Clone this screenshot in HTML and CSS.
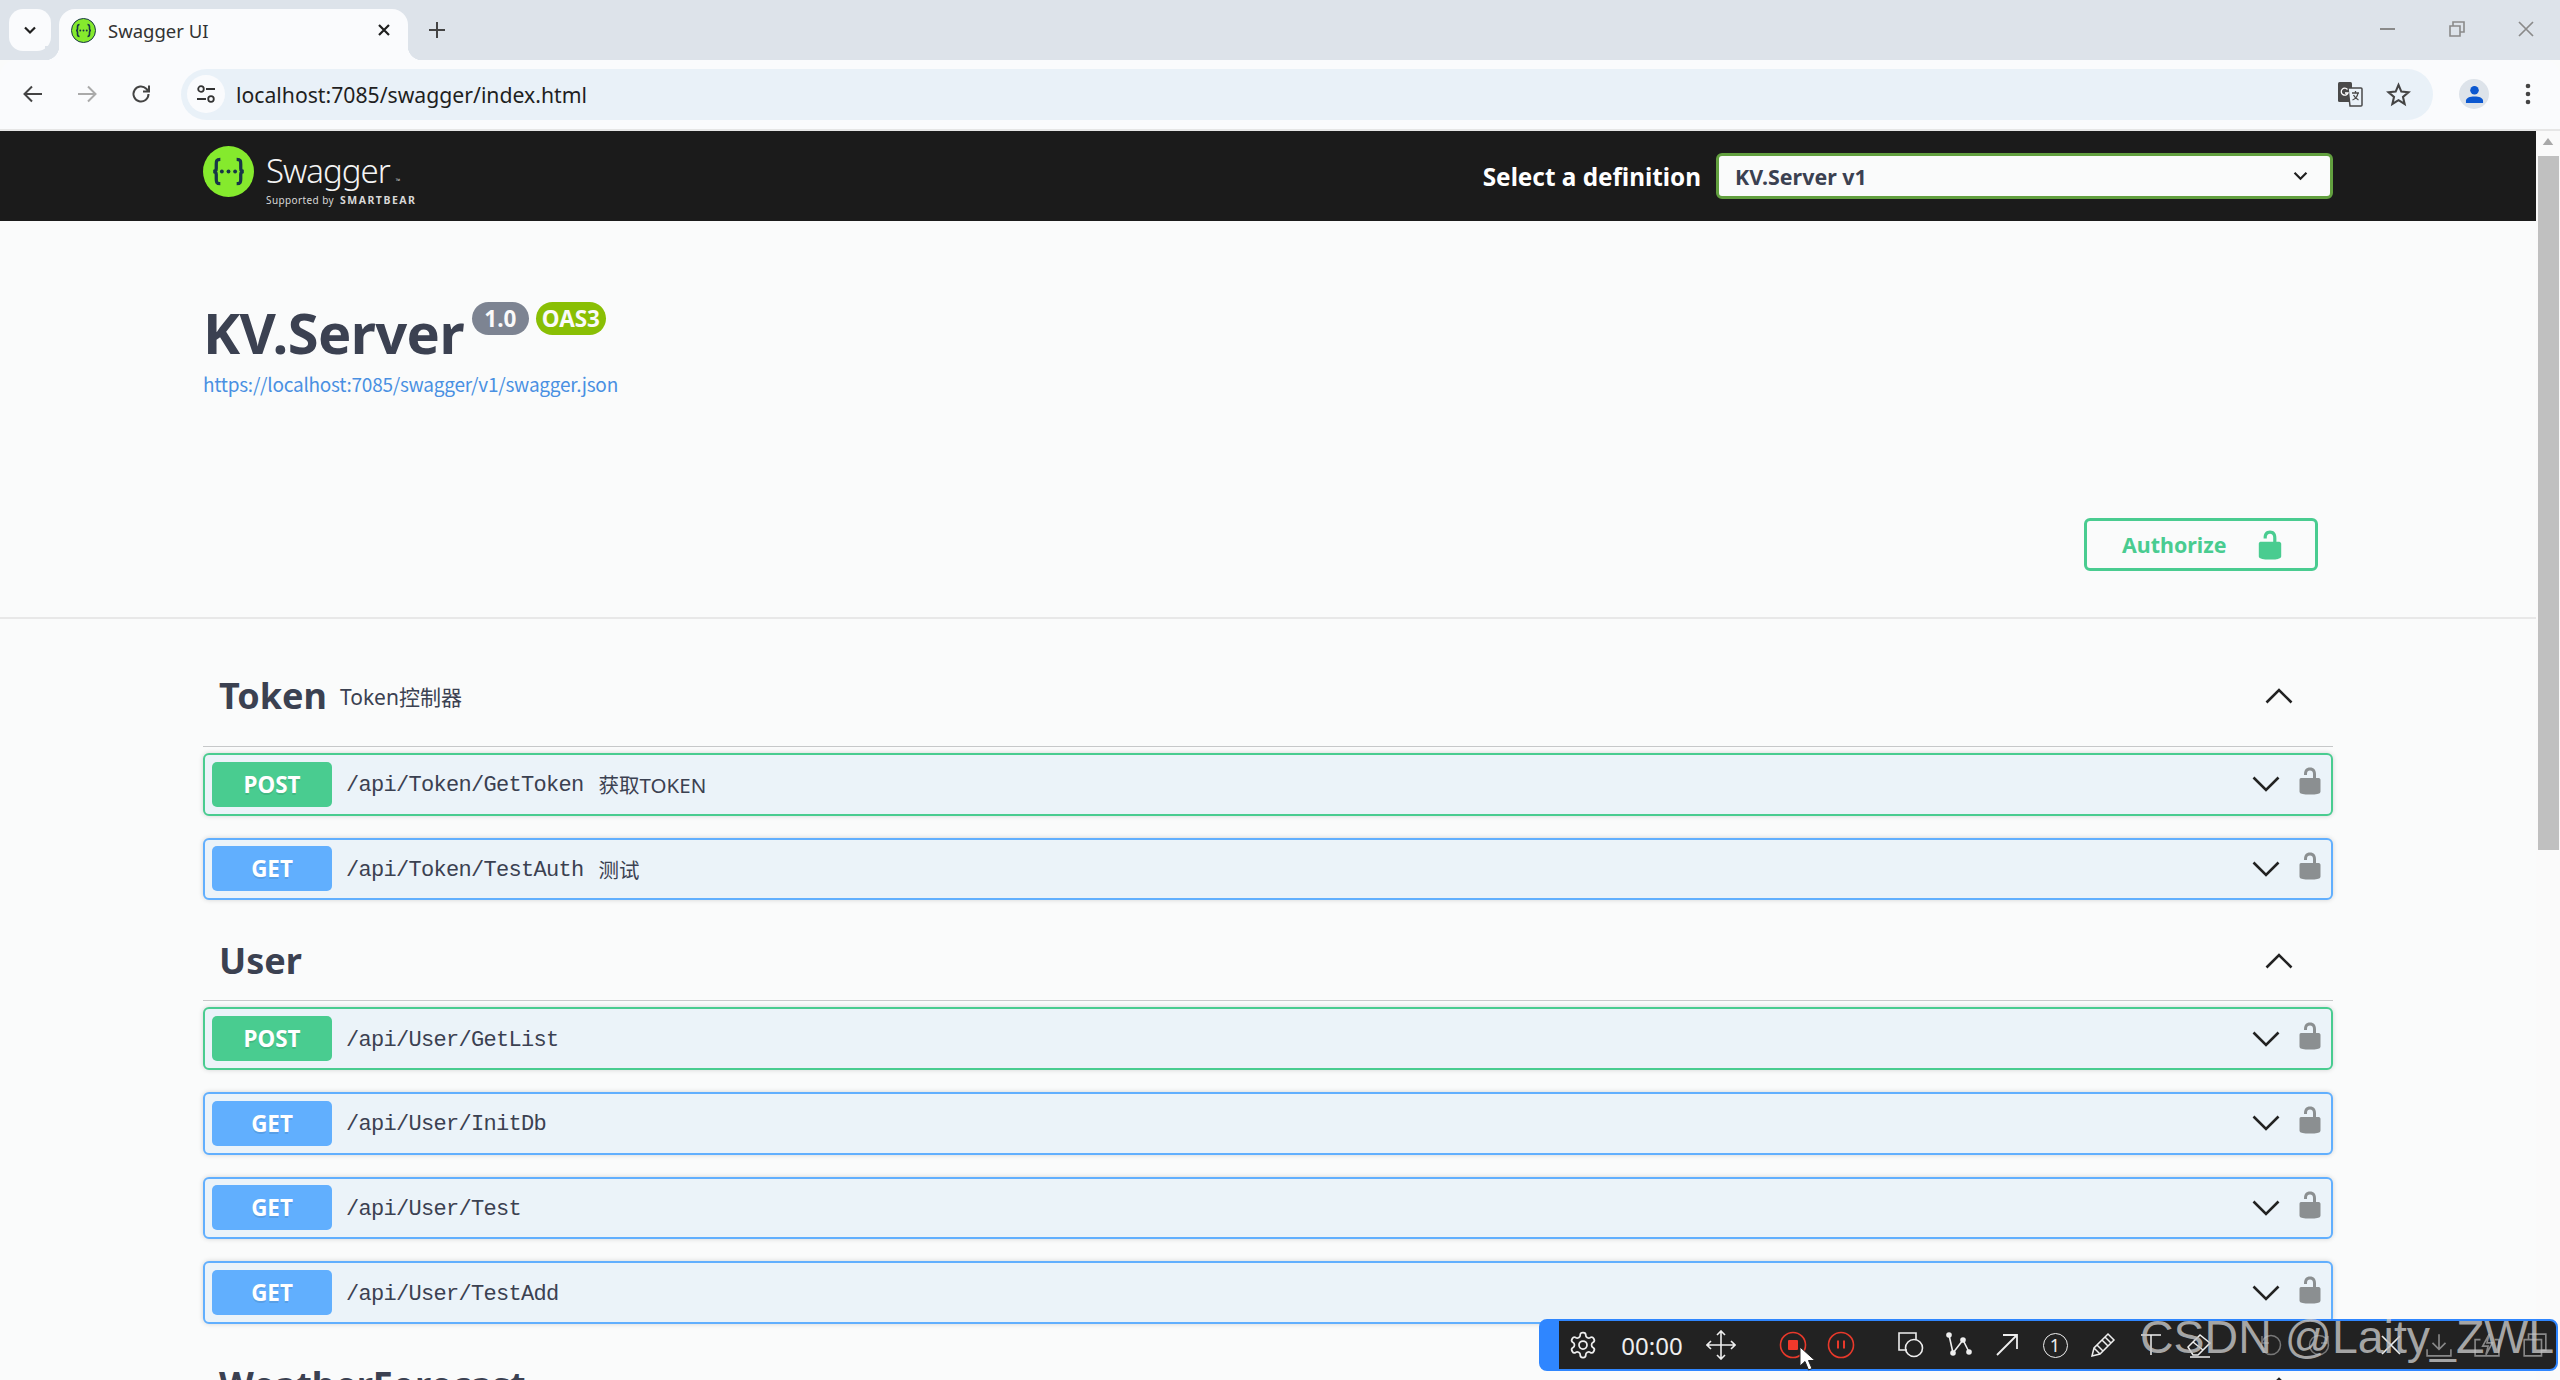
FILE: index.html
```html
<!DOCTYPE html>
<html lang="zh">
<head>
<meta charset="utf-8">
<title>Swagger UI</title>
<link rel="stylesheet" href="styles.css">
</head>
<body>
<svg class="defs" width="0" height="0" aria-hidden="true">
  <symbol id="lock" viewBox="0 0 20 20"><path d="M15.8 8H14V5.6C14 2.703 12.665 1 10 1 7.334 1 6 2.703 6 5.6V6h2v-.801C8 3.754 8.797 3 10 3c1.203 0 2 .754 2 2.199V8H4c-.553 0-1 .646-1 1.199V17c0 .549.428 1.139.951 1.307l1.197.387C5.672 18.861 6.55 19 7.1 19h5.8c.549 0 1.428-.139 1.951-.307l1.196-.387c.524-.167.953-.757.953-1.306V9.199C17 8.646 16.352 8 15.8 8z"/></symbol>
  <symbol id="down" viewBox="0 0 28 16"><path d="M1.5 1.5 14 14 26.5 1.5" fill="none" stroke="currentColor" stroke-width="2.6"/></symbol>
  <symbol id="up" viewBox="0 0 28 16"><path d="M1.5 14.5 14 2 26.5 14.5" fill="none" stroke="currentColor" stroke-width="2.6"/></symbol>
  <symbol id="brace" viewBox="0 0 50 50"><path d="M17 13c-4 0-4 2-4 5v4c0 2-1 3-3 3 2 0 3 1 3 3v4c0 3 0 5 4 5M33 13c4 0 4 2 4 5v4c0 2 1 3 3 3-2 0-3 1-3 3v4c0 3 0 5-4 5" fill="none" stroke="#173647" stroke-width="3.2"/><circle cx="18.5" cy="25" r="1.9" fill="#173647"/><circle cx="25" cy="25" r="1.9" fill="#173647"/><circle cx="31.5" cy="25" r="1.9" fill="#173647"/></symbol>
</svg>

<header class="chrome">
  <div class="tabstrip">
    <button class="tab-list" type="button"><svg viewBox="0 0 16 16" width="16" height="16"><path d="M3 5.5 8 10.5 13 5.5" fill="none" stroke="#1f1f1f" stroke-width="2.2"/></svg></button>
    <div class="tab">
      <svg class="favicon" viewBox="0 0 50 50" width="25" height="25"><circle cx="25" cy="25" r="24" fill="#85ea2d" stroke="#173647" stroke-width="2"/><use href="#brace"/></svg>
      <span class="tab-title">Swagger UI</span>
      <svg class="tab-close" viewBox="0 0 16 16" width="16" height="16"><path d="M3 3 13 13M13 3 3 13" stroke="#1f1f1f" stroke-width="2.2"/></svg>
    </div>
    <svg class="new-tab" viewBox="0 0 18 18" width="18" height="18"><path d="M9 1v16M1 9h16" stroke="#444" stroke-width="2"/></svg>
    <div class="window-controls">
      <svg viewBox="0 0 16 16" width="16" height="16"><path d="M0 8h15" stroke="#8a8a8a" stroke-width="2"/></svg>
      <svg viewBox="0 0 16 16" width="16" height="16"><path d="M1 5h10v10H1zM4 5V1h11v10h-4" fill="none" stroke="#8a8a8a" stroke-width="1.6"/></svg>
      <svg viewBox="0 0 16 16" width="16" height="16"><path d="M1 1 15 15M15 1 1 15" stroke="#8a8a8a" stroke-width="1.7"/></svg>
    </div>
  </div>
  <div class="toolbar">
    <svg class="nav" viewBox="0 0 24 24" width="24" height="24"><path d="M21 12H4M11 4.500 3.500 12 11 19.500" fill="none" stroke="#444" stroke-width="2"/></svg>
    <svg class="nav" viewBox="0 0 24 24" width="24" height="24"><path d="M3 12h17M13 4.500 20.500 12 13 19.500" fill="none" stroke="#aaa" stroke-width="2"/></svg>
    <svg class="nav" viewBox="0 0 24 24" width="24" height="24"><path d="M19.500 12a7.500 7.500 0 1 1-2.200-5.300L20 9.500M20 3.500v6h-6" fill="none" stroke="#444" stroke-width="2"/></svg>
    <div class="omnibox">
      <span class="site-info"><svg viewBox="0 0 20 20" width="20" height="20"><circle cx="5" cy="5" r="2.800" fill="none" stroke="#333" stroke-width="1.800"/><path d="M10 5h9M1 15h9" stroke="#333" stroke-width="1.800"/><circle cx="15" cy="15" r="2.800" fill="none" stroke="#333" stroke-width="1.800"/></svg></span>
      <span class="url">localhost:7085/swagger/index.html</span>
      <svg class="translate" viewBox="0 0 26 26" width="26" height="26"><rect x="1" y="1" width="14" height="20" rx="1.500" fill="#4a4a4a"/><path d="M11 7h13a1 1 0 0 1 1 1v16a1 1 0 0 1-1 1H13l-2-18z" fill="#eaf2f9" stroke="#4a4a4a" stroke-width="1.500"/><path d="M10.500 8.500a3.500 3.500 0 1 0 .5 3.500H8" fill="none" stroke="#fff" stroke-width="1.300"/><path d="M15 12h7M18.500 10v2M21 12c-.5 3-3 6-5.500 7M16.500 14c1 2 3 4 5 5" fill="none" stroke="#4a4a4a" stroke-width="1.300"/></svg>
      <svg class="star" viewBox="0 0 24 24" width="25" height="25"><path d="M12 2.800 14.700 9.200 21.600 9.800 16.300 14.300 17.900 21.100 12 17.500 6.100 21.100 7.700 14.300 2.400 9.800 9.300 9.200z" fill="none" stroke="#444" stroke-width="2"/></svg>
    </div>
    <span class="avatar"><svg viewBox="0 0 20 20" width="20" height="20"><circle cx="10" cy="5.500" r="4.500" fill="#0b57d0"/><path d="M1 19v-2.500C1 13.500 5 12 10 12s9 1.500 9 4.500V19z" fill="#0b57d0"/></svg></span>
    <svg class="kebab" viewBox="0 0 6 24" width="6" height="24"><circle cx="3" cy="4" r="2.300" fill="#444"/><circle cx="3" cy="12" r="2.300" fill="#444"/><circle cx="3" cy="20" r="2.300" fill="#444"/></svg>
  </div>
</header>

<div class="viewport">
  <main class="page">
    <nav class="topbar">
      <div class="brand">
        <svg class="logo" viewBox="0 0 50 50" width="51" height="51"><circle cx="25" cy="25" r="25" fill="#85ea2d"/><use href="#brace"/></svg>
        <div class="brand-text">
          <span class="brand-name">Swagger<sup class="tm">™</sup></span>
          <span class="brand-sub">Supported by <b>SMARTBEAR</b></span>
        </div>
      </div>
      <label class="definition">
        <span class="definition-label">Select a definition</span>
        <span class="select">KV.Server v1<svg viewBox="0 0 16 12" width="15" height="11"><path d="M1.500 2 8 8.500 14.500 2" fill="none" stroke="#1f1f1f" stroke-width="2.400"/></svg></span>
      </label>
    </nav>

    <section class="info">
      <div class="title-row">
        <h1>KV.Server</h1>
        <span class="pill pill-version">1.0</span>
        <span class="pill pill-oas">OAS3</span>
      </div>
      <a class="spec-link" href="#">https://localhost:7085/swagger/v1/swagger.json</a>
    </section>

    <section class="schemes">
      <button class="authorize" type="button">Authorize<svg width="32" height="32"><use href="#lock"/></svg></button>
    </section>

    <section class="ops">
      <div class="tag tag-described">
        <h2>Token</h2><span class="tag-desc">Token控制器</span>
        <svg class="chev-up" width="28" height="16"><use href="#up"/></svg>
      </div>
      <div class="op post"><span class="method">POST</span><span class="path">/api/Token/GetToken</span><span class="desc">获取TOKEN</span><svg class="chev" width="28" height="16"><use href="#down"/></svg><svg class="op-lock" width="30" height="30"><use href="#lock"/></svg></div>
      <div class="op get"><span class="method">GET</span><span class="path">/api/Token/TestAuth</span><span class="desc">测试</span><svg class="chev" width="28" height="16"><use href="#down"/></svg><svg class="op-lock" width="30" height="30"><use href="#lock"/></svg></div>

      <div class="tag">
        <h2>User</h2>
        <svg class="chev-up" width="28" height="16"><use href="#up"/></svg>
      </div>
      <div class="op post"><span class="method">POST</span><span class="path">/api/User/GetList</span><svg class="chev" width="28" height="16"><use href="#down"/></svg><svg class="op-lock" width="30" height="30"><use href="#lock"/></svg></div>
      <div class="op get"><span class="method">GET</span><span class="path">/api/User/InitDb</span><svg class="chev" width="28" height="16"><use href="#down"/></svg><svg class="op-lock" width="30" height="30"><use href="#lock"/></svg></div>
      <div class="op get"><span class="method">GET</span><span class="path">/api/User/Test</span><svg class="chev" width="28" height="16"><use href="#down"/></svg><svg class="op-lock" width="30" height="30"><use href="#lock"/></svg></div>
      <div class="op get"><span class="method">GET</span><span class="path">/api/User/TestAdd</span><svg class="chev" width="28" height="16"><use href="#down"/></svg><svg class="op-lock" width="30" height="30"><use href="#lock"/></svg></div>

      <div class="tag">
        <h2>WeatherForecast</h2>
        <svg class="chev-up" width="28" height="16"><use href="#up"/></svg>
      </div>
    </section>
  </main>
  <div class="scrollbar">
    <svg class="scroll-arrow" viewBox="0 0 12 8" width="12" height="7"><path d="M0 8 6 0 12 8z" fill="#a8a8a8"/></svg>
    <div class="scroll-thumb"></div>
  </div>
</div>

<aside class="recorder">
  <span class="tool"><svg viewBox="0 0 24 24" width="30" height="30"><path d="M12.220 2h-.44a2 2 0 0 0-2 2v.18a2 2 0 0 1-1 1.730l-.43.25a2 2 0 0 1-2 0l-.15-.08a2 2 0 0 0-2.730.73l-.22.38a2 2 0 0 0 .73 2.730l.15.1a2 2 0 0 1 1 1.720v.51a2 2 0 0 1-1 1.740l-.15.09a2 2 0 0 0-.73 2.730l.22.38a2 2 0 0 0 2.730.73l.15-.08a2 2 0 0 1 2 0l.43.25a2 2 0 0 1 1 1.730V20a2 2 0 0 0 2 2h.44a2 2 0 0 0 2-2v-.18a2 2 0 0 1 1-1.730l.43-.25a2 2 0 0 1 2 0l.15.08a2 2 0 0 0 2.730-.73l.22-.39a2 2 0 0 0-.73-2.730l-.15-.08a2 2 0 0 1-1-1.740v-.5a2 2 0 0 1 1-1.740l.15-.09a2 2 0 0 0 .73-2.730l-.22-.38a2 2 0 0 0-2.730-.73l-.15.08a2 2 0 0 1-2 0l-.43-.25a2 2 0 0 1-1-1.730V4a2 2 0 0 0-2-2z" fill="none" stroke="#eee" stroke-width="1.400"/><circle cx="12" cy="12" r="3.200" fill="none" stroke="#eee" stroke-width="1.400"/></svg></span>
  <span class="time">00:00</span>
  <span class="tool"><svg viewBox="0 0 30 30" width="30" height="30"><path d="M15 1v28M1 15h28M11 5l4-4 4 4M11 25l4 4 4-4M5 11l-4 4 4 4M25 11l4 4-4 4" fill="none" stroke="#eee" stroke-width="1.600"/></svg></span>
  <span class="tool tool-gap"><svg viewBox="0 0 28 28" width="28" height="28"><circle cx="14" cy="14" r="12.500" fill="none" stroke="#e8392b" stroke-width="1.600"/><rect x="9" y="9" width="10" height="10" rx="1" fill="#f0392b"/></svg></span>
  <span class="tool"><svg viewBox="0 0 28 28" width="28" height="28"><circle cx="14" cy="14" r="12.500" fill="none" stroke="#e8392b" stroke-width="1.600"/><path d="M11 9.500v8M17 9.500v8" stroke="#e8392b" stroke-width="2"/></svg></span>
  <span class="tool tool-gap-sm"><svg viewBox="0 0 26 26" width="26" height="26"><path d="M9 18H1V1h17v7" fill="none" stroke="#eee" stroke-width="1.600"/><circle cx="16" cy="16" r="8.500" fill="none" stroke="#eee" stroke-width="1.600"/></svg></span>
  <span class="tool"><svg viewBox="0 0 28 28" width="28" height="28"><path d="M4 4 8 22 18 9 24 21" fill="none" stroke="#eee" stroke-width="1.600"/><circle cx="4" cy="4" r="2.800" fill="#eee"/><circle cx="8" cy="22" r="2.800" fill="#eee"/><circle cx="18" cy="9" r="2.800" fill="#eee"/><circle cx="24" cy="21" r="2.800" fill="#eee"/></svg></span>
  <span class="tool"><svg viewBox="0 0 24 24" width="24" height="24"><path d="M2 22 22 2M8 2h14v14" fill="none" stroke="#eee" stroke-width="1.800"/></svg></span>
  <span class="tool"><span class="num">1</span></span>
  <span class="tool"><svg viewBox="0 0 26 26" width="26" height="26"><path d="M2 24 4 16 18 2 24 8 10 22zM15 5l6 6M4 16l6 6M7 13l6 6M12 8l6 6" fill="none" stroke="#eee" stroke-width="1.500"/></svg></span>
  <span class="tool"><svg viewBox="0 0 24 24" width="24" height="24"><path d="M2 2h20M12 2v20" stroke="#eee" stroke-width="1.500"/></svg></span>
  <span class="tool"><svg viewBox="0 0 26 26" width="26" height="26"><path d="M2 15 14 3 24 11 12 23H7zM7 10l10 8M4 25h20" fill="none" stroke="#eee" stroke-width="1.500"/></svg></span>
  <span class="tool tool-gap"><svg viewBox="0 0 24 24" width="24" height="24"><circle cx="12" cy="12" r="9.500" fill="none" stroke="#777" stroke-width="1.500"/><path d="M3 3v7h7" fill="none" stroke="#777" stroke-width="1.500"/></svg></span>
  <span class="tool"><svg viewBox="0 0 24 24" width="24" height="24"><circle cx="12" cy="12" r="9.500" fill="none" stroke="#777" stroke-width="1.500"/><path d="M21 3v7h-7" fill="none" stroke="#777" stroke-width="1.500"/></svg></span>
  <span class="tool tool-gap"><svg viewBox="0 0 22 22" width="22" height="22"><path d="M2 2 20 20M20 2 2 20" stroke="#eee" stroke-width="1.700"/></svg></span>
  <span class="tool"><svg viewBox="0 0 24 24" width="26" height="26"><path d="M12 2v14M6 10l6 6 6-6M1 16v6h22v-6" fill="none" stroke="#888" stroke-width="1.500"/></svg></span>
  <span class="tool"><svg viewBox="0 0 24 24" width="26" height="26"><path d="M14 2 8 13h5l-2 8 6-11h-5zM6 7H1v15h22V7h-4" fill="none" stroke="#888" stroke-width="1.500"/></svg></span>
  <span class="tool"><svg viewBox="0 0 24 24" width="26" height="26"><path d="M2 7h16v15H2zM6 7V2h16v15h-4" fill="none" stroke="#888" stroke-width="1.500"/></svg></span>
  <svg class="cursor" viewBox="0 0 17 25" width="17" height="25"><path d="M1 1v19l5-4.500L9.500 24l3.500-1.500-3.500-8H16z" fill="#fff" stroke="#222" stroke-width="1"/></svg>
</aside>
<div class="watermark">CSDN @Laity_ZWL</div>
</body>
</html>
```

FILE: styles.css
```css
* { box-sizing: border-box; }
html, body { margin: 0; height: 100%; }
body {
  width: 2560px;
  height: 1380px;
  overflow: hidden;
  position: relative;
  background: #fafbfb;
  font-family: "Noto Sans", "Noto Sans CJK SC", sans-serif;
  color: #3b4151;
}
.defs { position: absolute; }

/* browser chrome */
.tabstrip {
  height: 60px;
  background: #dde3ea;
  display: flex;
  align-items: flex-start;
  padding: 9px 0 0 9px;
}
.tab-list {
  width: 42px;
  height: 42px;
  border: 0;
  border-radius: 14px;
  background: #fafbfd;
  display: flex;
  align-items: center;
  justify-content: center;
  padding: 0;
}
.tab {
  width: 349px;
  height: 51px;
  margin-left: 8px;
  background: #fafbfd;
  border-radius: 16px 16px 0 0;
  display: flex;
  align-items: center;
  padding: 0 0 9px 12px;
  position: relative;
}
.tab::before, .tab::after {
  content: "";
  position: absolute;
  bottom: 0;
  width: 14px;
  height: 14px;
}
.tab::before { left: -14px; background: radial-gradient(circle at 0 0, #dde3ea 14px, #fafbfd 14.5px); }
.tab::after { right: -14px; background: radial-gradient(circle at 100% 0, #dde3ea 14px, #fafbfd 14.5px); }
.favicon { flex: none; }
.tab-title {
  margin-left: 12px;
  font-size: 18.5px;
  color: #333;
  flex: 1;
}
.tab-close { margin-right: 16px; }
.new-tab { margin: 12px 0 0 20px; }
.window-controls {
  margin-left: auto;
  margin-top: 12px;
  padding-right: 26px;
  display: flex;
  gap: 53px;
}
.toolbar {
  height: 71px;
  position: relative;
  background: #fafbfd;
  border-bottom: 2px solid #e6e6e6;
  border-radius: 16px 16px 0 0;
  display: flex;
  align-items: center;
  padding: 0 0 1px 21px;
}
.nav { margin-right: 30px; flex: none; }
.omnibox {
  margin-left: -2px;
  width: 2252px;
  height: 51px;
  border-radius: 26px;
  background: #e9f1f8;
  display: flex;
  align-items: center;
  padding: 0 22px 0 6px;
}
.site-info {
  width: 38px;
  height: 38px;
  border-radius: 50%;
  background: #fafbfd;
  display: flex;
  align-items: center;
  justify-content: center;
}
.url {
  margin-left: 11px;
  font-size: 21.2px;
  color: #1f1f1f;
  flex: 1;
}
.star { margin-left: 23px; }
.avatar {
  width: 30px;
  height: 30px;
  margin-left: 26px;
  border-radius: 50%;
  background: #dde3ea;
  display: flex;
  align-items: center;
  justify-content: center;
}
.avatar svg { width: 19px; height: 19px; }
.kebab { margin-left: 36px; }

/* page */
.viewport { display: flex; height: 1249px; overflow: hidden; }
.page { width: 2536px; flex: none; }
.scrollbar { flex: 1; background: #fafafa; position: relative; padding: 21px 1px 0 2px; }
.scroll-arrow { position: absolute; top: 7px; left: 6px; }
.scroll-thumb { height: 694px; margin-top: 4px; background: #c0c0c0; }

.topbar {
  height: 90px;
  background: #1b1b1b;
  padding: 0 203px;
  display: flex;
  align-items: center;
  justify-content: space-between;
}
.brand { display: flex; align-items: flex-start; gap: 12px; margin-top: -4px; }
.logo { margin-top: 4px; flex: none; }
.brand-text { display: flex; flex-direction: column; color: #fff; }
.brand-name { font-size: 33px; font-weight: 300; line-height: 44px; letter-spacing: -1px; color: #f4f4f4; padding-top: 7px; margin-bottom: -9.5px; }
.tm { font-size: 6px; vertical-align: baseline; margin-left: 6px; }
.brand-sub { font-size: 10px; line-height: 12px; color: #d8d8d8; white-space: nowrap; letter-spacing: .4px; }
.brand-sub b { font-size: 10.5px; font-weight: 700; letter-spacing: 1.5px; margin-left: 3px; }
.definition { display: flex; align-items: center; gap: 15px; }
.definition-label { font-size: 24.3px; font-weight: 700; color: #fff; white-space: nowrap; }
.select {
  width: 617px;
  height: 46px;
  border: 3px solid #62a03f;
  border-radius: 6px;
  background: #fafbfb;
  color: #3b4151;
  font-size: 21.4px;
  font-weight: 700;
  display: flex;
  align-items: center;
  justify-content: space-between;
  padding: 0 22px 0 16px;
}

.info { padding: 72px 203px 0; height: 296px; }
.title-row { display: flex; align-items: flex-start; height: 85px; }
h1 {
  margin: 0;
  font-size: 56px;
  line-height: 78px;
  font-weight: 700;
  letter-spacing: -.6px;
  color: #3b4151;
}
.pill {
  margin-top: 9px;
  height: 33px;
  border-radius: 17px;
  color: #fafafa;
  font-size: 22.5px;
  font-weight: 700;
  line-height: 33px;
  text-align: center;
}
.pill-version { width: 57px; margin-left: 8px; background: #7d8492; }
.pill-oas { width: 70px; margin-left: 7px; background: #89bf04; }
.spec-link { display: block; font-family: "Noto Sans CJK SC", "Noto Sans", sans-serif; font-size: 19px; letter-spacing: -.25px; line-height: 30px; color: #4990e2; text-decoration: none; margin-top: -9px; }

.schemes {
  height: 102px;
  padding: 0 218px 0 0;
  display: flex;
  justify-content: flex-end;
  border-bottom: 2px solid #e8e8e8;
}
.authorize {
  width: 234px;
  height: 53px;
  margin-top: 1px;
  border: 3px solid #49cc90;
  border-radius: 6px;
  background: transparent;
  color: #49cc90;
  font: 700 21.4px "Noto Sans", sans-serif;
  display: flex;
  align-items: center;
  padding: 0 29px 0 35px;
  justify-content: space-between;
}
.authorize svg { fill: #49cc90; }

.ops { padding: 0 203px; }
.tag {
  height: 79px;
  padding: 0 16px;
  display: flex;
  align-items: center;
  gap: 13px;
  border-bottom: 1.500px solid #c6c8c9;
  margin-bottom: 6px;
  position: relative;
}
.tag-described { height: 128px; padding-top: 38px; padding-bottom: 12px; }
h2 { margin: 0; font-size: 36px; line-height: 52px; font-weight: 700; color: #3b4151; }
.tag-desc { font-size: 21px; color: #3b4151; }
.chev-up { margin-left: auto; margin-right: 24px; color: #222; }

.op {
  height: 62.67px;
  margin-bottom: 22px;
  border: 2px solid;
  border-radius: 6px;
  background: #ebf3f9;
  box-shadow: 0 0 5px rgba(0, 0, 0, .16);
  display: flex;
  align-items: center;
  padding: 0 6px 0 7px;
}
.op.post { border-color: #49cc90; }
.op.get { border-color: #61affe; }
.method {
  width: 120px;
  height: 45px;
  border-radius: 5px;
  color: #fff;
  font-size: 22.4px;
  font-weight: 700;
  line-height: 45px;
  text-align: center;
  text-shadow: 0 2px 0 rgba(0, 0, 0, .1);
}
.post .method { background: #49cc90; }
.get .method { background: #61affe; }
.path {
  margin-left: 14px;
  padding-top: 3px;
  font-family: "Liberation Mono", monospace;
  font-size: 22px;
  letter-spacing: -.7px;
  color: #3b4151;
}
.desc {
  margin-left: 15px;
  font-size: 20.5px;
  color: #3b4151;
}
.chev { margin-left: auto; color: #222; }
.op-lock { margin: 0 0 6px 15px; fill: #8b8f91; }

/* screen recorder strip */
.recorder {
  position: absolute;
  left: 1539px;
  top: 1319px;
  width: 1019px;
  height: 52px;
  background: #222;
  border: solid #2f86ff;
  border-width: 2px 2px 2px 20px;
  border-radius: 8px;
  display: flex;
  align-items: center;
}
.tool {
  width: 48px;
  height: 48px;
  flex: none;
  display: flex;
  align-items: center;
  justify-content: center;
}
.tool-gap { margin-left: 24px; }
.tool-gap-sm { margin-left: 22px; }
.time {
  width: 90px;
  text-align: center;
  color: #eee;
  font-size: 24px;
  font-family: "Noto Sans", sans-serif;
  flex: none;
}
.num {
  width: 25px;
  height: 25px;
  border: 1.500px solid #eee;
  border-radius: 50%;
  color: #eee;
  font-size: 18px;
  line-height: 22px;
  text-align: center;
}
.cursor { position: absolute; left: 240px; top: 25px; }
.watermark {
  position: absolute;
  left: 2140px;
  top: 1302px;
  font-family: "Liberation Sans", sans-serif;
  font-size: 46.5px;
  line-height: 70px;
  color: rgba(196, 196, 196, .82);
  white-space: nowrap;
}
```
